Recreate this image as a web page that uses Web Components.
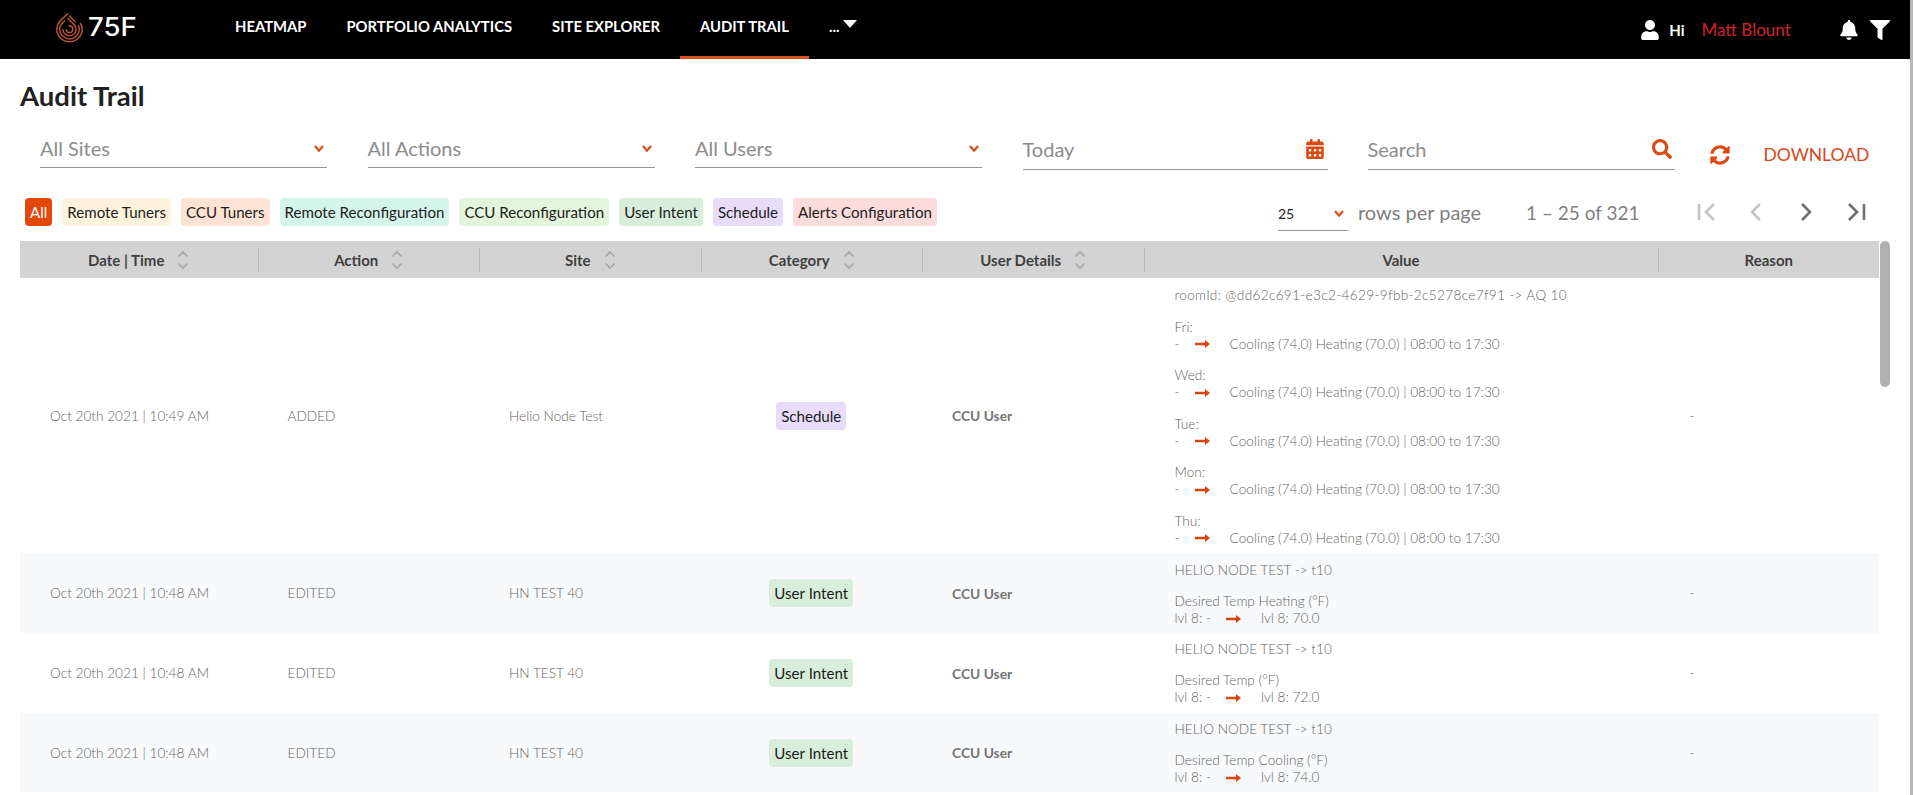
<!DOCTYPE html>
<html lang="en">
<head>
<meta charset="utf-8">
<title>Audit Trail</title>
<style>
  html, body { margin: 0; height: 100%; overflow: hidden; background: #fff; }
  body { font-family: Lato, "Liberation Sans", sans-serif; color: #888; }
</style>
</head>
<body>
<audit-nav></audit-nav>
<audit-page>
  <filter-bar></filter-bar>
  <tag-bar></tag-bar>
  <audit-table></audit-table>
</audit-page>

<script>
const ICONS = {
    user: ['0 0 448 512', 'M224 256c70.7 0 128-57.3 128-128S294.7 0 224 0 96 57.3 96 128s57.3 128 128 128zm89.6 32h-16.7c-22.2 10.2-46.9 16-72.9 16s-50.6-5.8-72.9-16h-16.7C60.2 288 0 348.2 0 422.4V464c0 26.5 21.5 48 48 48h352c26.5 0 48-21.5 48-48v-41.6c0-74.2-60.2-134.4-134.4-134.4z'],
    bell: ['0 0 448 512', 'M224 512c35.32 0 63.97-28.65 63.97-64H160.03c0 35.35 28.65 64 63.97 64zm215.39-149.71c-19.32-20.76-55.47-51.99-55.47-154.29 0-77.7-54.48-139.9-127.94-155.16V32c0-17.67-14.32-32-31.98-32s-31.98 14.33-31.98 32v20.84C118.56 68.1 64.08 130.3 64.08 208c0 102.3-36.15 133.53-55.47 154.29-6 6.45-8.66 14.16-8.61 21.71.11 16.4 12.98 32 32.1 32h383.8c19.12 0 32-15.6 32.1-32 .05-7.55-2.61-15.27-8.61-21.71z'],
    filter: ['0 0 512 512', 'M487.976 0H24.028C2.71 0-8.047 25.866 7.058 40.971L192 225.941V432c0 7.831 3.821 15.17 10.237 19.662l80 55.98C298.02 518.69 320 507.493 320 487.98V225.941l184.947-184.97C520.021 25.896 509.338 0 487.976 0z'],
    search: ['0 0 512 512', 'M505 442.7L405.3 343c-4.5-4.5-10.6-7-17-7H372c27.6-35.3 44-79.7 44-128C416 93.1 322.9 0 208 0S0 93.1 0 208s93.1 208 208 208c48.3 0 92.7-16.4 128-44v16.3c0 6.4 2.5 12.5 7 17l99.7 99.7c9.4 9.4 24.6 9.4 33.9 0l28.3-28.3c9.4-9.4 9.4-24.6.1-34zM208 336c-70.7 0-128-57.2-128-128 0-70.7 57.2-128 128-128 70.7 0 128 57.2 128 128 0 70.7-57.2 128-128 128z'],
    sync: ['0 0 512 512', 'M370.72 133.28C339.458 104.008 298.888 87.962 255.848 88c-77.458.068-144.328 53.178-162.791 126.85-1.344 5.363-6.122 9.15-11.651 9.15H24.103c-7.498 0-13.194-6.807-11.807-14.176C33.933 94.924 134.813 8 256 8c66.448 0 126.791 26.136 171.315 68.685L463.03 40.97C478.149 25.851 504 36.559 504 57.941V192c0 13.255-10.745 24-24 24H345.941c-21.382 0-32.09-25.851-16.971-40.971l41.75-41.749zM32 296h134.059c21.382 0 32.09 25.851 16.971 40.971l-41.75 41.75c31.262 29.273 71.835 45.319 114.876 45.28 77.418-.07 144.315-53.144 162.787-126.849 1.344-5.363 6.122-9.15 11.651-9.15h57.304c7.498 0 13.194 6.807 11.807 14.176C478.067 417.076 377.187 504 256 504c-66.448 0-126.791-26.136-171.315-68.685L48.97 471.03C33.851 486.149 8 475.441 8 454.059V320c0-13.255 10.745-24 24-24z'],
    calendar: ['0 0 448 512', 'M0 464c0 26.5 21.5 48 48 48h352c26.5 0 48-21.5 48-48V192H0v272zm320-196c0-6.6 5.4-12 12-12h40c6.6 0 12 5.4 12 12v40c0 6.6-5.4 12-12 12h-40c-6.6 0-12-5.4-12-12v-40zm0 128c0-6.6 5.4-12 12-12h40c6.6 0 12 5.4 12 12v40c0 6.6-5.4 12-12 12h-40c-6.6 0-12-5.4-12-12v-40zM192 268c0-6.6 5.4-12 12-12h40c6.6 0 12 5.4 12 12v40c0 6.6-5.4 12-12 12h-40c-6.6 0-12-5.4-12-12v-40zm0 128c0-6.6 5.4-12 12-12h40c6.6 0 12 5.4 12 12v40c0 6.6-5.4 12-12 12h-40c-6.6 0-12-5.4-12-12v-40zM64 268c0-6.6 5.4-12 12-12h40c6.6 0 12 5.4 12 12v40c0 6.6-5.4 12-12 12H76c-6.6 0-12-5.4-12-12v-40zm0 128c0-6.6 5.4-12 12-12h40c6.6 0 12 5.4 12 12v40c0 6.6-5.4 12-12 12H76c-6.6 0-12-5.4-12-12v-40zM400 64h-48V16c0-8.8-7.2-16-16-16h-32c-8.8 0-16 7.2-16 16v48H160V16c0-8.8-7.2-16-16-16h-32c-8.8 0-16 7.2-16 16v48H48C21.5 64 0 85.5 0 112v48h448v-48c0-26.5-21.5-48-48-48z']
};

function icon(name, size, color) {
    const [box, d] = ICONS[name];
    return `<svg viewBox="${box}" width="${size}" height="${size}" fill="${color}" style="display:block"><path d="${d}"/></svg>`;
}

const CHEVRON = `<svg width="10" height="7" viewBox="0 0 10 7" style="display:block"><path d="M1 1l4 4.6L9 1" fill="none" stroke="#dc4a12" stroke-width="2.2"/></svg>`;
const ARROW = `<svg width="15" height="8" viewBox="0 0 15 8" style="display:block"><path d="M0 2.700h10V0l5 4-5 4V5.300H0z" fill="#d9440f"/></svg>`;

class AuditNav extends HTMLElement {
    constructor() {
        super();
        const shadow = this.attachShadow({ mode: 'open' });
        shadow.innerHTML = `
            <style>
                :host { display: block; height: 59px; background: #000; color: #fff; border-right: 3px solid #b8b8b8; }
                .bar { display: flex; height: 100%; align-items: stretch; }
                .logo { display: flex; align-items: center; gap: 5px; width: 158px; margin-left: 56px; padding-bottom: 5px; box-sizing: border-box; }
                .logo span { font: 500 25px/1 Inter, sans-serif; transform: scaleX(1.1); transform-origin: left; }
                nav { display: flex; margin-left: 1px; }
                a { display: flex; align-items: center; padding: 0 20px 5px; font-size: 14.8px; font-weight: 700; box-sizing: border-box; border-bottom: 3px solid transparent; }
                a.active { border-bottom-color: #d9521c; }
                .more { gap: 3px; }
                .more i { display: block; width: 0; height: 0; border: 7px solid transparent; border-top: 8px solid #fff; border-bottom: 0; margin: -3px 0 0 1px; }
                .right { margin-left: auto; display: flex; align-items: center; }
                .hi { margin-left: 9px; font-size: 15px; font-weight: 700; }
                .name { margin-left: 17px; width: 137.500px; color: #d3202a; font-size: 17px; }
                .right .f { margin-left: 11px; margin-right: 20px; }
            </style>
            <div class="bar">
                <div class="logo">
                    <svg width="27" height="31" viewBox="0 0 33 37" fill="none" stroke="#b9533a" stroke-width="1.8">
                        <path d="M15 1L6 9.500C2.500 13 1 16.500 1 20.500 1 29 8 36 16.500 36S32 29 32 20.500C32 17.500 31 15 29.500 13"/>
                        <path d="M11 10L6.500 14.500C5 16.500 4.500 18.500 4.500 20.500 4.500 27 10 32.500 16.500 32.500S28.500 27 28.500 20.500C28.500 18.500 28 17 27 15.500"/>
                        <path d="M8.500 20.500C8.500 25 12 28.500 16.500 28.500S24.500 25 24.500 20.500C24.500 18 23.500 16.500 22 15L14 7"/>
                        <path d="M12.500 20.500C12.500 22.700 14.300 24.500 16.500 24.500S20.500 22.700 20.500 20.500 18.700 16.500 16.500 16.500L18 18"/>
                        <path d="M16 4L24 12"/>
                    </svg>
                    <span>75F</span>
                </div>
                <nav>
                    <a>HEATMAP</a>
                    <a>PORTFOLIO ANALYTICS</a>
                    <a>SITE EXPLORER</a>
                    <a class="active">AUDIT TRAIL</a>
                    <a class="more">...<i></i></a>
                </nav>
                <div class="right">
                    ${icon('user', 20, '#fff')}
                    <span class="hi">Hi</span>
                    <span class="name">Matt Blount</span>
                    ${icon('bell', 20, '#fff')}
                    <span class="f">${icon('filter', 20, '#fff')}</span>
                </div>
            </div>
        `;
    }
}

class AuditPage extends HTMLElement {
    constructor() {
        super();
        const shadow = this.attachShadow({ mode: 'open' });
        shadow.innerHTML = `
            <style>
                :host { display: block; padding: 0 23px 0 20px; position: relative; }
                h1 { margin: 0; padding-top: 22px; height: 43px; font-size: 27.5px; line-height: 30px; font-weight: 700; color: #212121; }
                /* grey strip down the window's right edge */
                .edge { position: absolute; top: 0; right: 0; width: 3px; height: 736px; background: #b8b8b8; }
            </style>
            <h1>Audit Trail</h1>
            <slot></slot>
            <div class="edge"></div>
        `;
    }
}

class FilterField extends HTMLElement {
    constructor() {
        super();
        const shadow = this.attachShadow({ mode: 'open' });
        shadow.innerHTML = `
            <style>
                :host { display: flex; align-items: center; justify-content: space-between; height: 39px; box-sizing: border-box; border-bottom: 1.5px solid #949494; font-size: 20px; color: #8c8c8c; font-weight: 400; padding-right: 3px; }
            </style>
            <span>${this.getAttribute('label')}</span>
            <slot></slot>
        `;
    }
}

class FilterBar extends HTMLElement {
    constructor() {
        super();
        const shadow = this.attachShadow({ mode: 'open' });
        shadow.innerHTML = `
            <style>
                :host { display: flex; align-items: flex-start; padding-left: 20px; margin-top: 5px; height: 69px; }
                filter-field { flex: none; }
                .w { width: 287px; margin-right: 40.500px; }
                .w2 { width: 305px; margin-right: 40px; height: 40.500px; }
                .w3 { width: 307px; height: 40.500px; }
                .refresh { margin: 16px 0 0 35px; }
                .download { margin: 15px 0 0 34px; font-size: 17.500px; color: #d9471a; line-height: 22px; }
            </style>
            <filter-field class="w" label="All Sites">${CHEVRON}</filter-field>
            <filter-field class="w" label="All Actions">${CHEVRON}</filter-field>
            <filter-field class="w" label="All Users">${CHEVRON}</filter-field>
            <filter-field class="w2" label="Today">${icon('calendar', 20, '#dc4a12')}</filter-field>
            <filter-field class="w3" label="Search">${icon('search', 20, '#dc4a12')}</filter-field>
            <span class="refresh">${icon('sync', 20, '#dc4a12')}</span>
            <span class="download">DOWNLOAD</span>
        `;
    }
}

class TagChip extends HTMLElement {
    constructor() {
        super();
        const shadow = this.attachShadow({ mode: 'open' });
        shadow.innerHTML = `
            <style>
                :host { display: inline-block; padding: 0 5px; height: 28px; line-height: 28px; border-radius: 4px; font-size: 15.1px; color: #1c1c1c; background: var(--chip); white-space: nowrap; }
            </style>
            <slot></slot>
        `;
    }
}

class TagBar extends HTMLElement {
    constructor() {
        super();
        const shadow = this.attachShadow({ mode: 'open' });
        shadow.innerHTML = `
            <style>
                :host { display: flex; align-items: center; padding-left: 5px; height: 28px; }
                .tags { display: flex; gap: 10px; }
                .pager { margin-left: auto; display: flex; align-items: center; font-size: 19px; color: #7f7f7f; }
                .size { width: 70px; height: 34px; margin-top: 3px; box-sizing: border-box; border-bottom: 1.5px solid #949494; display: flex; align-items: center; justify-content: space-between; font-size: 14px; color: #222; padding-right: 4px; }
                .rows { margin-left: 10px; width: 168px; font-size: 20px; }
                .count { width: 171px; }
                .nav { display: flex; align-items: center; margin-right: 24px; }
                svg.p { display: block; fill: none; stroke-width: 2.600; }
            </style>
            <div class="tags">
                <tag-chip style="--chip:#e2470c;color:#fff">All</tag-chip>
                <tag-chip style="--chip:#fff3dd">Remote Tuners</tag-chip>
                <tag-chip style="--chip:#fde3d3">CCU Tuners</tag-chip>
                <tag-chip style="--chip:#d6f5ea">Remote Reconfiguration</tag-chip>
                <tag-chip style="--chip:#e3f5da">CCU Reconfiguration</tag-chip>
                <tag-chip style="--chip:#d8eedb">User Intent</tag-chip>
                <tag-chip style="--chip:#e8dcfb">Schedule</tag-chip>
                <tag-chip style="--chip:#fddcdc">Alerts Configuration</tag-chip>
            </div>
            <div class="pager">
                <div class="size"><span>25</span>${CHEVRON}</div>
                <span class="rows">rows per page</span>
                <span class="count">1 – 25 of 321</span>
                <div class="nav">
                    <svg class="p" width="19" height="18" viewBox="0 0 19 18" stroke="#c4c4c4"><path d="M2 1v16M17 1L9 9l8 8"/></svg>
                    <svg class="p" width="12" height="18" viewBox="0 0 12 18" stroke="#c4c4c4" style="margin-left:34px"><path d="M10 1L2 9l8 8"/></svg>
                    <svg class="p" width="12" height="18" viewBox="0 0 12 18" stroke="#6f6f6f" style="margin-left:38px"><path d="M2 1l8 8-8 8"/></svg>
                    <svg class="p" width="19" height="18" viewBox="0 0 19 18" stroke="#6f6f6f" style="margin-left:35px"><path d="M2 1l8 8-8 8M17 1v16"/></svg>
                </div>
            </div>
        `;
    }
}

const COLS = '237.5px 221.5px 221.5px 221.5px 221.5px 514px 221.5px';

class AuditTable extends HTMLElement {
    constructor() {
        super();
        const shadow = this.attachShadow({ mode: 'open' });
        shadow.innerHTML = `
            <style>
                :host { display: block; position: relative; margin-top: 15px; width: 1859px; }
                .head { display: grid; grid-template-columns: ${COLS}; height: 37px; background: #d3d3d3; align-items: center; font-size: 15px; font-weight: 700; color: #3f3f3f; }
                .head div { display: flex; justify-content: center; align-items: center; gap: 13px; height: 24px; border-left: 1px solid #b8b8b8; box-sizing: border-box; }
                .head div:first-child { border-left: 0; }
                .sort { display: block; }
                .thumb { position: absolute; left: 1860px; top: 0; width: 10px; height: 146px; border-radius: 5px; background: #b0b0b0; }
            </style>
            <div class="head"></div>
            <slot></slot>
            <div class="thumb"></div>
        `;
        const sort = `<svg class="sort" width="12" height="20" viewBox="0 0 12 20" fill="none" stroke="#a6a6a6" stroke-width="1.600"><path d="M1.500 6.500L6 2l4.500 4.500M1.500 13.500L6 18l4.500-4.500"/></svg>`;
        const heads = ['Date | Time', 'Action', 'Site', 'Category', 'User Details', 'Value', 'Reason'];
        shadow.querySelector('.head').innerHTML = heads.map((h, i) =>
            `<div><span>${h}</span>${i < 5 ? sort : ''}</div>`).join('');
    }

    connectedCallback() {
        const days = ['Fri', 'Wed', 'Tue', 'Mon', 'Thu'];
        const schedule = days.map(d =>
            `<p class="gap">${d}:</p><p class="ln">-<i>${ARROW}</i>Cooling (74.0) Heating (70.0) | 08:00 to 17:30</p>`).join('');
        const lvl = (title, val) =>
            `<p>HELIO NODE TEST -&gt; t10</p><p class="gap">${title}</p><p class="ln">lvl 8: -<i>${ARROW}</i>lvl 8: ${val}</p>`;
        const rows = [
            ['Oct 20th 2021 | 10:49 AM', 'ADDED', 'Helio Node Test', 'Schedule', '#e8dcfb',
                `<p class="room">roomId: @dd62c691-e3c2-4629-9fbb-2c5278ce7f91 -&gt; AQ 10</p>${schedule}`, 275, 9],
            ['Oct 20th 2021 | 10:48 AM', 'EDITED', 'HN TEST 40', 'User Intent', '#d8eedb', lvl('Desired Temp Heating (°F)', '70.0'), 80, 8.5],
            ['Oct 20th 2021 | 10:48 AM', 'EDITED', 'HN TEST 40', 'User Intent', '#d8eedb', lvl('Desired Temp (°F)', '72.0'), 80, 7.5],
            ['Oct 20th 2021 | 10:48 AM', 'EDITED', 'HN TEST 40', 'User Intent', '#d8eedb', lvl('Desired Temp Cooling (°F)', '74.0'), 79, 7.5]
        ];
        rows.forEach((r, i) => {
            const row = document.createElement('audit-row');
            row.setRow(r, i % 2 === 1);
            this.appendChild(row);
        });
    }
}

class AuditRow extends HTMLElement {
    constructor() {
        super();
        this.attachShadow({ mode: 'open' });
    }

    setRow([date, action, site, cat, color, value, height, pad], shaded) {
        this.shadowRoot.innerHTML = `
            <style>
                :host { display: grid; grid-template-columns: ${COLS}; align-items: center; height: ${height}px; font-size: 13.65px; font-weight: 300; color: #646464; background: ${shaded ? '#f8f9fa' : '#fff'}; }
                .c { padding-left: 30px; }
                .cat { display: flex; justify-content: center; font-weight: 400; }
                .u { font-weight: 700; font-size: 13.8px; color: #747474; }
                .v { align-self: start; padding: ${pad}px 0 0 31px; line-height: 17px; }
                .r { padding-left: 32px; }
                p { margin: 0; }
                p.gap { margin-top: 14.500px; }
                p.room { letter-spacing: 0.3px; }
                .ln { display: flex; align-items: center; }
                .ln i { display: block; margin: 0 20px 0 15px; }
            </style>
            <div class="c">${date}</div>
            <div class="c">${action}</div>
            <div class="c">${site}</div>
            <div class="cat"><tag-chip style="--chip:${color}">${cat}</tag-chip></div>
            <div class="c u">CCU User</div>
            <div class="v">${value}</div>
            <div class="r">-</div>
        `;
    }
}

customElements.define('audit-nav', AuditNav);
customElements.define('audit-page', AuditPage);
customElements.define('filter-field', FilterField);
customElements.define('filter-bar', FilterBar);
customElements.define('tag-chip', TagChip);
customElements.define('tag-bar', TagBar);
customElements.define('audit-row', AuditRow);
customElements.define('audit-table', AuditTable);
</script>
</body>
</html>
